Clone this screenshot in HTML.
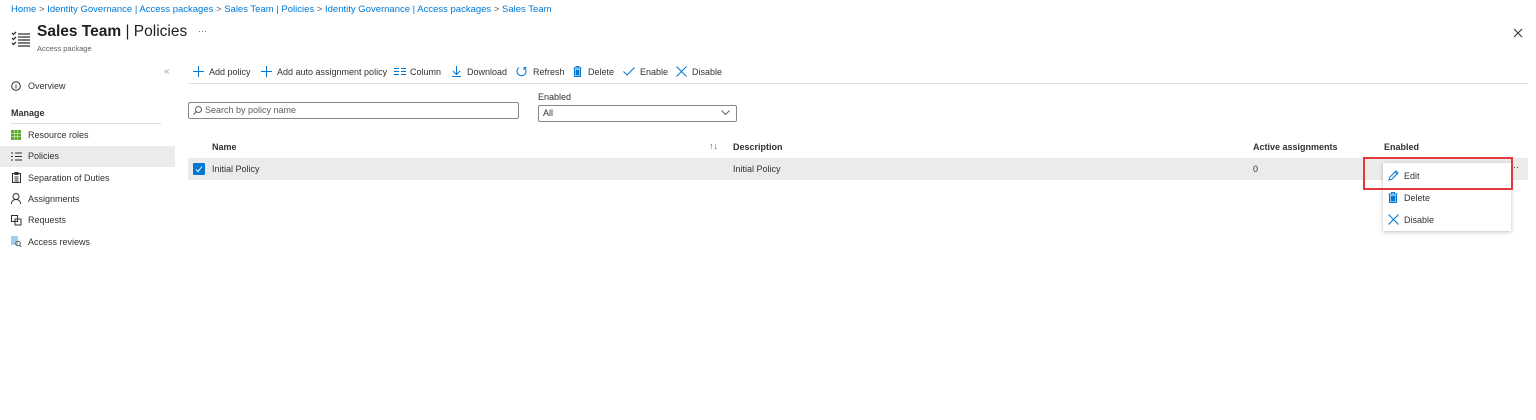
<!DOCTYPE html><html><head><style>
body{margin:0;width:1536px;height:420px;background:#fff;font-family:"Liberation Sans",sans-serif;color:#323130;position:relative;overflow:hidden;font-size:9px}
.a{position:absolute;white-space:nowrap}
.bc{color:#0078d4;font-size:9.5px}
.nav{left:28px;font-size:9px}
.ic{position:absolute}
.tb{position:absolute;top:67px;font-size:9px}
.ti{position:absolute;top:66px}
</style></head><body>
<div class="a bc" style="left:11px;top:4px">Home <span style="color:#605e5c">&gt;</span> Identity Governance | Access packages <span style="color:#605e5c">&gt;</span> Sales Team | Policies <span style="color:#605e5c">&gt;</span> Identity Governance | Access packages <span style="color:#605e5c">&gt;</span> Sales Team</div>
<svg class="ic" style="left:11px;top:31px" width="20" height="16" viewBox="0 0 20 16" stroke="#323130" stroke-width="1.3" fill="none"><path d="M1 2l1.5 1.5L5 1M1 7l1.5 1.5L5 6M1 12l1.5 1.5L5 11M7 3h12M7 6h12M7 9h12M7 12h12M7 15h12"/></svg>
<div class="a" style="left:37px;top:23px;font-size:15.5px;color:#201f1e;font-weight:600">Sales Team <span style="font-weight:400">| Policies</span></div>
<div class="a" style="left:198px;top:26px;color:#605e5c">···</div>
<div class="a" style="left:37px;top:44px;font-size:7.5px;color:#605e5c">Access package</div>
<svg class="ic" style="left:1513px;top:28px" width="10" height="10" stroke="#323130" stroke-width="1.1"><path d="M1 1l8 8M9 1l-8 8"/></svg>
<div class="a" style="left:164px;top:66px;color:#a19f9d;font-size:10px">«</div>
<svg class="ic" style="left:11px;top:81px" width="10" height="10" fill="none" stroke="#323130"><circle cx="5" cy="5" r="4.3"/><path d="M5 4v3.5M5 2.6v.6"/></svg>
<div class="a nav" style="top:81px">Overview</div>
<div class="a" style="left:11px;top:108px;font-weight:bold">Manage</div>
<div class="a" style="left:11px;top:123px;width:150px;height:1px;background:#e1dfdd"></div>
<svg class="ic" style="left:11px;top:130px" width="10" height="10" fill="#5ca82a"><rect x="0" y="0" width="3" height="3"/><rect x="3.5" y="0" width="3" height="3"/><rect x="7" y="0" width="3" height="3"/><rect x="0" y="3.5" width="3" height="3"/><rect x="3.5" y="3.5" width="3" height="3"/><rect x="7" y="3.5" width="3" height="3"/><rect x="0" y="7" width="3" height="3"/><rect x="3.5" y="7" width="3" height="3"/><rect x="7" y="7" width="3" height="3"/></svg>
<div class="a nav" style="top:130px">Resource roles</div>
<div class="a" style="left:0;top:146px;width:175px;height:21px;background:#edebe9"></div>
<svg class="ic" style="left:11px;top:152px" width="11" height="9" stroke="#323130" fill="none"><path d="M0 1h2M0 4.5h2M0 8h2M4 1h7M4 4.5h7M4 8h7"/></svg>
<div class="a nav" style="top:151px">Policies</div>
<svg class="ic" style="left:12px;top:172px" width="9" height="11" stroke="#323130" fill="none"><rect x=".5" y="1.5" width="8" height="9"/><path d="M3 .5h3v2H3zM2.5 5h4M2.5 7h4M2.5 9h4"/></svg>
<div class="a nav" style="top:173px">Separation of Duties</div>
<svg class="ic" style="left:11px;top:193px" width="10" height="11" stroke="#323130" fill="none"><circle cx="5" cy="3.5" r="3"/><path d="M.5 11c0-3 2-4.5 4.5-4.5S9.5 8 9.5 11"/></svg>
<div class="a nav" style="top:194px">Assignments</div>
<svg class="ic" style="left:11px;top:215px" width="11" height="11" stroke="#323130" fill="none"><rect x=".5" y=".5" width="6" height="6"/><rect x="4" y="4" width="6" height="6"/></svg>
<div class="a nav" style="top:215px">Requests</div>
<svg class="ic" style="left:11px;top:236px" width="11" height="11"><rect x="0" y="0" width="7" height="9" fill="#9fd0ee"/><circle cx="7" cy="7.5" r="2.3" fill="none" stroke="#605e5c"/><path d="M8.6 9.2l2 2" stroke="#605e5c"/></svg>
<div class="a nav" style="top:237px">Access reviews</div>

<svg class="ti" style="left:193px" width="11" height="11" stroke="#0078d4"><path d="M5.5 0v11M0 5.5h11"/></svg><div class="tb" style="left:209px">Add policy</div>
<svg class="ti" style="left:261px" width="11" height="11" stroke="#0078d4"><path d="M5.5 0v11M0 5.5h11"/></svg><div class="tb" style="left:277px">Add auto assignment policy</div>
<svg class="ti" style="left:394px;top:68px" width="12" height="7" stroke="#0078d4"><path d="M0 .5h5M7 .5h5M0 3.5h5M7 3.5h5M0 6.5h5M7 6.5h5"/></svg><div class="tb" style="left:410px">Column</div>
<svg class="ti" style="left:452px" width="9" height="11" stroke="#0078d4" fill="none"><path d="M4.5 0v8M1 5l3.5 3.5L8 5M0 10.5h9"/></svg><div class="tb" style="left:467px">Download</div>
<svg class="ti" style="left:516px" width="11" height="11" stroke="#0078d4" fill="none"><path d="M3 1.5A4.5 4.5 0 1 0 8 1.5M8 1.5V4M8 1.5h2.5"/></svg><div class="tb" style="left:533px">Refresh</div>
<svg class="ti" style="left:573px" width="9" height="11" stroke="#0078d4" fill="none"><path d="M.5 2h8M3 2V.5h3V2M1.5 2v8.5h6V2"/><rect x="3" y="4" width="3" height="5" fill="#0078d4"/></svg><div class="tb" style="left:588px">Delete</div>
<svg class="ti" style="left:623px;top:67px" width="12" height="9" stroke="#0078d4" fill="none"><path d="M.5 4.5l3.5 3.5L11.5.5"/></svg><div class="tb" style="left:640px">Enable</div>
<svg class="ti" style="left:676px" width="11" height="11" stroke="#0078d4"><path d="M.5 .5l10 10M10.5 .5l-10 10"/></svg><div class="tb" style="left:692px">Disable</div>

<div class="a" style="left:188px;top:83px;width:1340px;height:1px;background:#e1dfdd"></div>
<div class="a" style="left:188px;top:102px;width:329px;height:15px;border:1px solid #8a8886;border-radius:2px"></div>
<svg class="ic" style="left:193px;top:106px" width="9" height="9" stroke="#605e5c" fill="none"><circle cx="5.5" cy="3.5" r="3"/><path d="M3.3 5.7L.5 8.5"/></svg>
<div class="a" style="left:205px;top:105px;color:#605e5c;font-size:9px">Search by policy name</div>
<div class="a" style="left:538px;top:92px">Enabled</div>
<div class="a" style="left:538px;top:105px;width:197px;height:15px;border:1px solid #8a8886;border-radius:2px"></div>
<div class="a" style="left:543px;top:108px">All</div>
<svg class="ic" style="left:721px;top:110px" width="9" height="6" stroke="#605e5c" fill="none"><path d="M.5 .5l4 4 4-4"/></svg>

<div class="a" style="left:212px;top:142px;font-weight:bold">Name</div>
<div class="a" style="left:709px;top:141px;color:#605e5c">↑↓</div>
<div class="a" style="left:733px;top:142px;font-weight:bold">Description</div>
<div class="a" style="left:1253px;top:142px;font-weight:bold">Active assignments</div>
<div class="a" style="left:1384px;top:142px;font-weight:bold">Enabled</div>
<div class="a" style="left:188px;top:158px;width:1340px;height:22px;background:#edebe9"></div>
<div class="a" style="left:193px;top:163px;width:12px;height:12px;background:#0078d4;border-radius:1px"></div>
<svg class="ic" style="left:195px;top:165px" width="8" height="8" stroke="#fff" fill="none"><path d="M1 4.5l2 2 4-5"/></svg>
<div class="a" style="left:212px;top:164px">Initial Policy</div>
<div class="a" style="left:733px;top:164px">Initial Policy</div>
<div class="a" style="left:1253px;top:164px">0</div>
<div class="a" style="left:1513px;top:162px;color:#323130">··</div>

<div class="a" style="left:1383px;top:163px;width:128px;height:68px;background:#fff;box-shadow:0 1px 4px rgba(0,0,0,.25)"></div>
<svg class="ic" style="left:1388px;top:170px" width="11" height="11" stroke="#0078d4" fill="none"><path d="M1 10l.6-2.6L8 1l2 2-6.4 6.4zM7 2l2 2"/></svg>
<div class="a" style="left:1404px;top:171px">Edit</div>
<svg class="ic" style="left:1388px;top:192px" width="10" height="11" stroke="#0078d4" fill="none"><path d="M.5 2h9M3.5 2V.5h3V2M1.5 2v8.5h7V2"/><rect x="3" y="4" width="4" height="5" fill="#0078d4"/></svg>
<div class="a" style="left:1404px;top:193px">Delete</div>
<svg class="ic" style="left:1388px;top:214px" width="11" height="11" stroke="#0078d4"><path d="M.5 .5l10 10M10.5 .5l-10 10"/></svg>
<div class="a" style="left:1404px;top:215px">Disable</div>
<div class="a" style="left:1363px;top:157px;width:146px;height:29px;border:2px solid #e0393e"></div>
</body></html>
